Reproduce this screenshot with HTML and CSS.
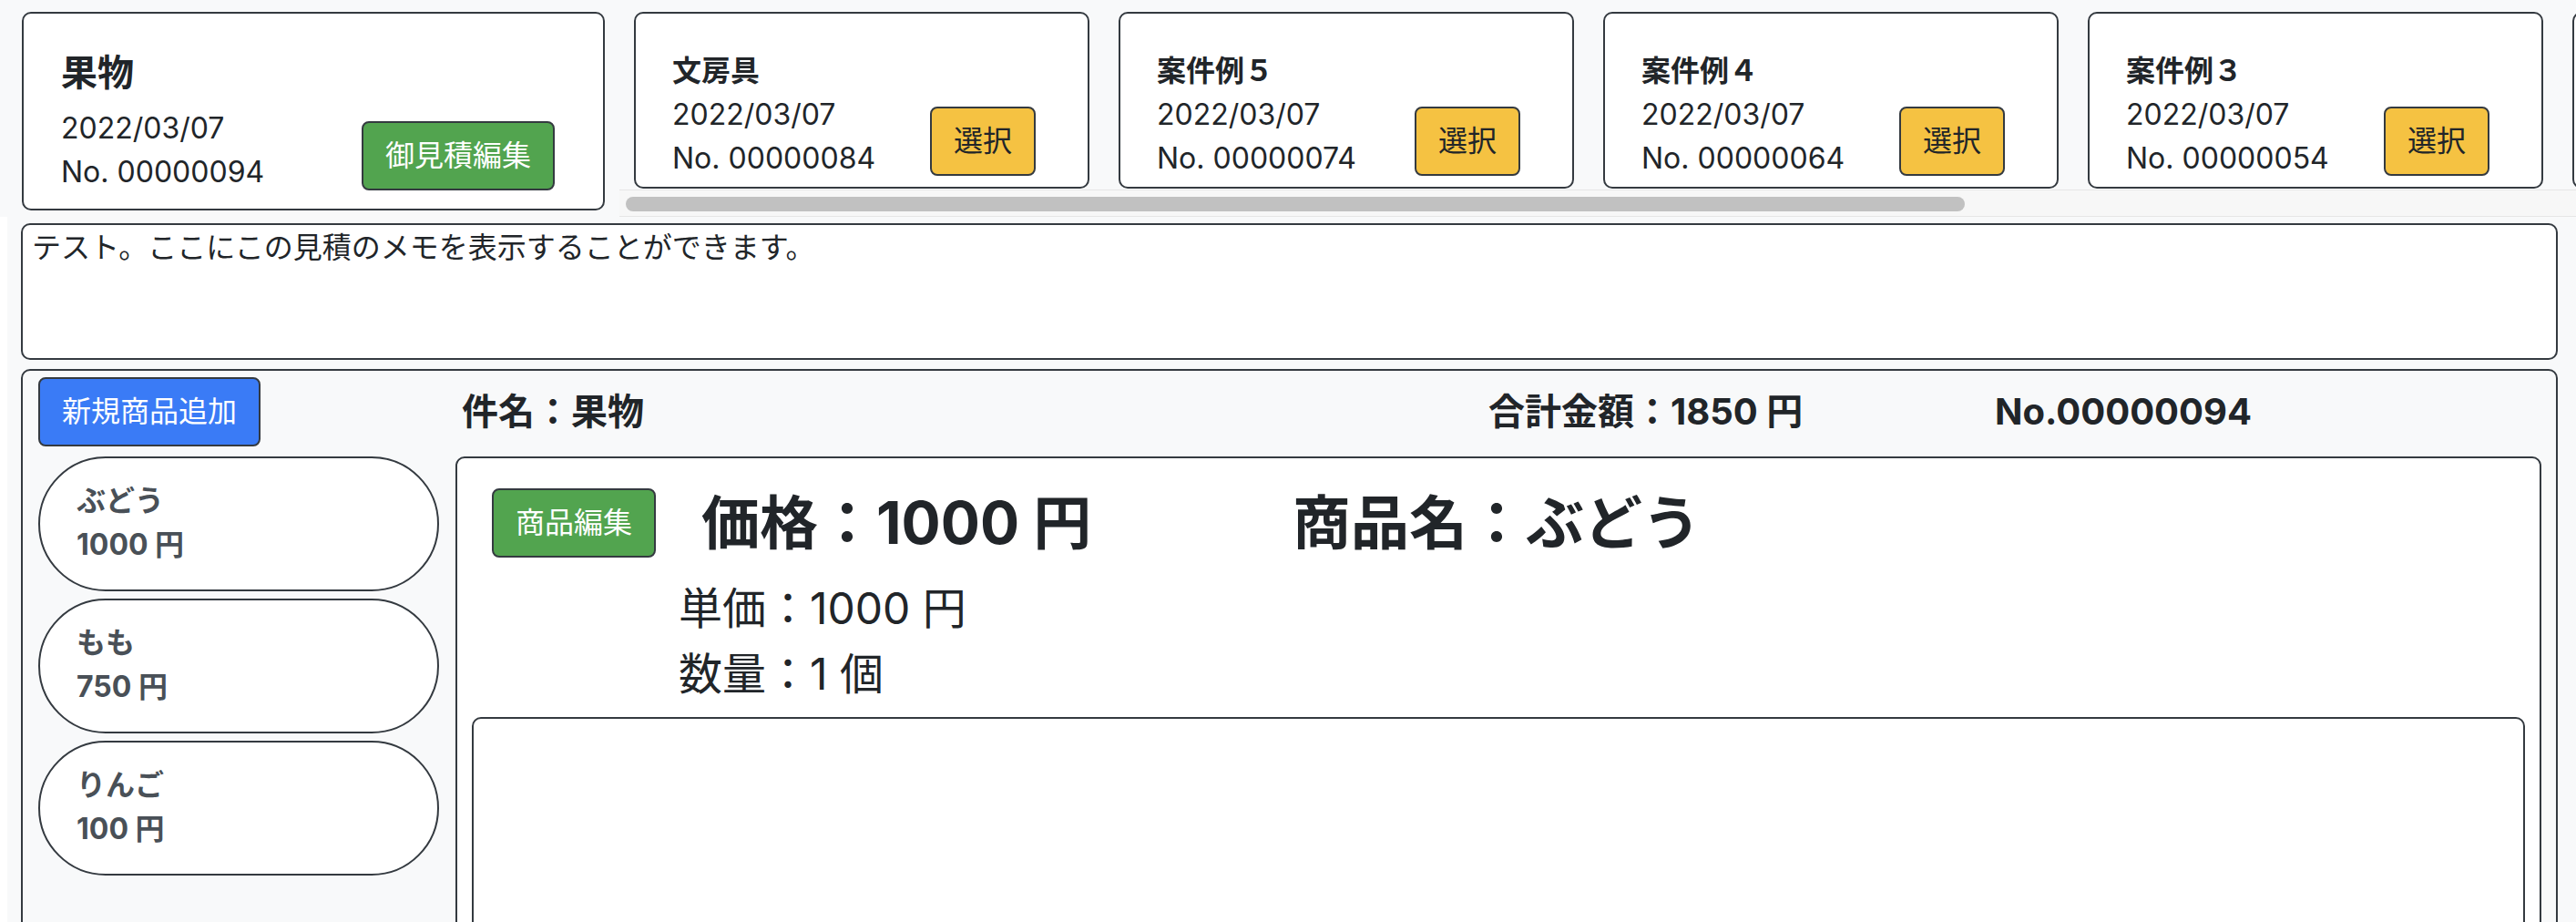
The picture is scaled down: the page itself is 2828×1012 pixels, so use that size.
FILE: index.html
```html
<!DOCTYPE html>
<html lang="ja">
<head>
<meta charset="utf-8">
<title>御見積</title>
<link rel="stylesheet" href="styles.css">
</head>
<body>
<div class="top">
  <div class="card card-main">
    <div class="title-lg">果物</div>
    <div class="card-row">
      <div class="meta"><div>2022/03/07</div><div>No. 00000094</div></div>
      <button class="btn btn-green btn-main">御見積編集</button>
    </div>
  </div>
  <div class="scroller">
    <div class="cards">
      <div class="card card-sm">
        <div class="title-sm">文房具</div>
        <div class="card-row">
          <div class="meta"><div>2022/03/07</div><div>No. 00000084</div></div>
          <button class="btn btn-yellow btn-sel">選択</button>
        </div>
      </div>
      <div class="card card-sm">
        <div class="title-sm">案件例５</div>
        <div class="card-row">
          <div class="meta"><div>2022/03/07</div><div>No. 00000074</div></div>
          <button class="btn btn-yellow btn-sel">選択</button>
        </div>
      </div>
      <div class="card card-sm">
        <div class="title-sm">案件例４</div>
        <div class="card-row">
          <div class="meta"><div>2022/03/07</div><div>No. 00000064</div></div>
          <button class="btn btn-yellow btn-sel">選択</button>
        </div>
      </div>
      <div class="card card-sm">
        <div class="title-sm">案件例３</div>
        <div class="card-row">
          <div class="meta"><div>2022/03/07</div><div>No. 00000054</div></div>
          <button class="btn btn-yellow btn-sel">選択</button>
        </div>
      </div>
      <div class="card card-sm">
        <div class="title-sm">案件例２</div>
        <div class="card-row">
          <div class="meta"><div>2022/03/07</div><div>No. 00000044</div></div>
          <button class="btn btn-yellow btn-sel">選択</button>
        </div>
      </div>
      <div class="card card-sm">
        <div class="title-sm">案件例１</div>
        <div class="card-row">
          <div class="meta"><div>2022/03/07</div><div>No. 00000034</div></div>
          <button class="btn btn-yellow btn-sel">選択</button>
        </div>
      </div>
    </div>
    <div class="hscroll"><div class="thumb"></div></div>
  </div>
</div>

<div class="lower">
  <div class="memo">テスト。ここにこの見積のメモを表示することができます。</div>
  <div class="panel">
    <div class="head">
      <button class="btn btn-blue">新規商品追加</button>
      <span class="h-name">件名：果物</span>
      <span class="h-total">合計金額：1850 円</span>
      <span class="h-no">No.00000094</span>
    </div>
    <div class="body">
      <div class="list">
        <div class="pill"><div>ぶどう</div><div>1000 円</div></div>
        <div class="pill"><div>もも</div><div>750 円</div></div>
        <div class="pill"><div>りんご</div><div>100 円</div></div>
      </div>
      <div class="detail">
        <div class="d-head">
          <button class="btn btn-green">商品編集</button>
          <span class="d-price">価格：1000 円</span>
          <span class="d-name">商品名：ぶどう</span>
        </div>
        <div class="d-sub">
          <div>単価：1000 円</div>
          <div>数量：1 個</div>
        </div>
        <div class="d-note"></div>
      </div>
    </div>
  </div>
</div>
</body>
</html>
```

FILE: styles.css
```css
* { box-sizing: border-box; }
html, body { margin: 0; padding: 0; }
body {
  width: 2828px;
  height: 1012px;
  overflow: hidden;
  background: #fff;
  color: #212529;
  font-family: Inter, "Noto Sans CJK JP", sans-serif;
  font-size: 32px;
  line-height: 48px;
}

.btn {
  font-family: inherit;
  font-size: 32px;
  line-height: 48px;
  padding: 12px 24px;
  border: 2px solid #343a40;
  border-radius: 8px;
  color: #fff;
  flex-shrink: 0;
  white-space: nowrap;
}
.btn-green { background: #52a44f; }
.btn-blue { background: #3a7bf6; }
.btn-yellow { background: #f5c242; color: #212529; }

/* top strip */
.top {
  display: flex;
  background: #f8f9fa;
  height: 238px;
  padding-left: 24px;
}
.card {
  background: #fff;
  border: 2px solid #343a40;
  border-radius: 10px;
  flex-shrink: 0;
}
.card-main {
  width: 640px;
  height: 218px;
  margin-top: 13px;
  padding: 41px 40px 16px 41px;
}
.title-lg {
  font-size: 40px;
  font-weight: 700;
  line-height: 48px;
  margin-bottom: 13px;
}
.card-row {
  display: flex;
  justify-content: space-between;
  align-items: flex-end;
}
.btn-main { margin: 0 13px 4px 0; }

.scroller {
  flex: 1;
  min-width: 0;
  margin-left: 16px;
  overflow: hidden;
  display: flex;
  flex-direction: column;
}
.cards {
  display: flex;
  gap: 32px;
  height: 208px;
  padding: 13px 0 0 16px;
}
.card-sm {
  width: 500px;
  height: 194px;
  padding: 39px 40px 7px 40px;
}
.title-sm {
  font-weight: 700;
  line-height: 48px;
}
.btn-sel { margin: 0 17px 5px 0; }

.hscroll {
  height: 30px;
  background: #f7f7f7;
  border-top: 1px solid #e6e6e6;
  border-bottom: 1px solid #e6e6e6;
  padding: 7px 0 0 7px;
}
.thumb {
  width: 1470px;
  height: 16px;
  border-radius: 8px;
  background: #c1c1c1;
}

/* lower area */
.lower {
  margin-left: 8px;
  background: #f8f9fa;
  padding: 7px 20px 0 15px;
  height: 774px;
  overflow: hidden;
}
.memo {
  height: 150px;
  background: #fff;
  border: 2px solid #343a40;
  border-radius: 10px;
  padding: 3px 10px;
  line-height: 44px;
}
.panel {
  margin-top: 10px;
  border: 2px solid #343a40;
  border-radius: 10px;
  background: #f8f9fa;
  padding: 7px 16px 0 17px;
  height: 700px;
  overflow: hidden;
}
.head {
  display: flex;
  align-items: center;
  font-size: 40px;
  font-weight: 700;
  line-height: 48px;
}
.h-name { margin-left: 221px; width: 1127px; }
.h-total { width: 556px; }

.body {
  display: flex;
  margin-top: 11px;
  gap: 18px;
}
.list {
  width: 440px;
  flex-shrink: 0;
  display: flex;
  flex-direction: column;
  gap: 8px;
}
.pill {
  height: 148px;
  background: #fff;
  border: 2px solid #343a40;
  border-radius: 999px;
  padding: 23px 40px;
  color: #495057;
  font-weight: 700;
}
.detail {
  flex: 1;
  background: #fff;
  border: 2px solid #343a40;
  border-radius: 10px;
  padding: 32px 16px 0 16px;
  height: 600px;
}
.d-head {
  display: flex;
  align-items: center;
  margin-left: 22px;
  font-size: 64px;
  font-weight: 700;
  line-height: 77px;
}
.d-price { margin-left: 50px; width: 649px; }
.d-sub {
  margin: 20px 0 0 227px;
  font-size: 48px;
  line-height: 72px;
}
.d-note {
  margin-top: 11px;
  height: 400px;
  border: 2px solid #343a40;
  border-radius: 10px;
  background: #fff;
}
```
